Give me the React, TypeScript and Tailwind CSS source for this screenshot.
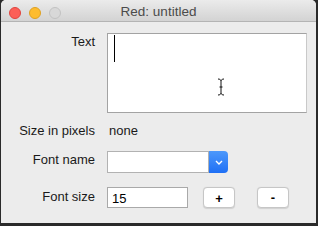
import React from 'react';

function TrafficLights() {
  return (
    <div className="flex gap-[8px] pl-[8px] pt-[7px]">
      <span className="block h-[12px] w-[12px] rounded-full bg-[#fc5f57] border border-[#e0443e]" />
      <span className="block h-[12px] w-[12px] rounded-full bg-[#fdbc2e] border border-[#dea123]" />
      <span className="block h-[12px] w-[12px] rounded-full bg-[#d8d8d8] border border-[#c2c2c2]" />
    </div>
  );
}

function IBeam() {
  return (
    <svg width="8" height="18" viewBox="0 0 8 18" className="absolute left-[109px] top-[44px]">
      <g fill="none" stroke="#ffffff" strokeWidth="2.2" strokeLinecap="round" opacity="0.7">
        <path d="M1 1 C3 1 4 2 4 3 C4 2 5 1 7 1" />
        <path d="M4 3 V15" />
        <path d="M1 17 C3 17 4 16 4 15 C4 16 5 17 7 17" />
      </g>
      <g fill="none" stroke="#111111" strokeWidth="1">
        <path d="M1 1 C3 1 4 2 4 3 C4 2 5 1 7 1" />
        <path d="M4 3 V15" />
        <path d="M1 17 C3 17 4 16 4 15 C4 16 5 17 7 17" />
        <path d="M2.5 9 H5.5" />
      </g>
    </svg>
  );
}

export default function App() {
  return (
    <div className="w-[318px] h-[226px] bg-[#2a2a2a] pl-[1px] pr-[2px] pb-[3px] font-['Liberation_Sans',Arial,sans-serif] text-[13px] leading-[16px] text-[#1a1a1a]">
      <div className="h-full rounded-t-[5px] overflow-hidden bg-[#ececec] flex flex-col">
        {/* title bar */}
        <div className="relative h-[22px] shrink-0 bg-gradient-to-b from-[#ebebeb] to-[#d3d3d3] border-b border-[#b4b4b4]">
          <TrafficLights />
          <div className="absolute inset-x-0 top-[4px] text-center text-[#4b4b4b] text-[13.5px]">Red: untitled</div>
        </div>

        {/* form */}
        <div className="flex flex-col pt-[11px]">
          <div className="flex items-start">
            <div className="w-[94px] text-right pt-[1px]">Text</div>
            <div className="relative ml-[12px] w-[200px] h-[80px] bg-white border border-[#a3a3a3] border-r-[#c9c9c9]">
              <div className="ml-[6px] mt-[1px] w-[1px] h-[27px] bg-black" />
              <IBeam />
            </div>
          </div>

          <div className="flex mt-[10px]">
            <div className="w-[94px] text-right">Size in pixels</div>
            <div className="pl-[14px]">none</div>
          </div>

          <div className="flex items-start mt-[12px]">
            <div className="w-[94px] text-right pt-[1px]">Font name</div>
            <div className="ml-[12px] flex h-[22px]">
              <div className="w-[102px] h-full bg-white border border-[#b2b2b2]" />
              <div className="w-[19px] h-full rounded-r-[4px] bg-gradient-to-b from-[#4c98fb] to-[#1e6ff5] flex items-center justify-center">
                <svg width="8" height="5" viewBox="0 0 8 5">
                  <path d="M1 1 L4 4 L7 1" fill="none" stroke="#ffffff" strokeWidth="1.4" />
                </svg>
              </div>
            </div>
          </div>

          <div className="flex items-start mt-[14px]">
            <div className="w-[94px] text-right pt-[2px]">Font size</div>
            <div className="ml-[12px] w-[81px] h-[21px] bg-white border border-[#a9a9a9] pl-[4px] pt-[3px] text-black">15</div>
            <button className="ml-[15px] w-[32px] h-[21px] rounded-[4px] bg-white border border-[#c6c6c6] shadow-[0_0.5px_1px_rgba(0,0,0,0.12)] flex items-center justify-center pt-[2px] font-bold text-black">+</button>
            <button className="ml-[22px] w-[32px] h-[21px] rounded-[4px] bg-white border border-[#c6c6c6] shadow-[0_0.5px_1px_rgba(0,0,0,0.12)] flex items-center justify-center pt-[1px] font-bold text-black">-</button>
          </div>
        </div>
      </div>
    </div>
  );
}
